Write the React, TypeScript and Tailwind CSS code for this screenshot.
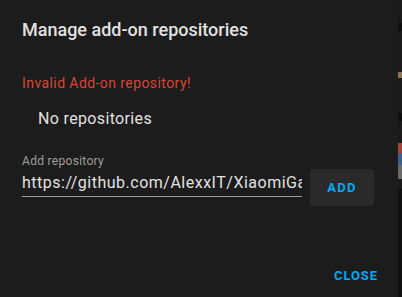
export default function App() {
  return (
    <div className="flex h-[297px] w-[402px] overflow-hidden bg-[#111111] font-['Roboto',sans-serif]">
      {/* Dialog */}
      <div className="flex w-[398px] shrink-0 flex-col bg-[#1c1c1c]">
        <h2 className="pl-[22px] pt-[19px] text-[18px] font-medium leading-[22px] text-[#e1e1e1]">
          Manage add-on repositories
        </h2>

        <div className="pl-[22px] pt-[32px] text-[14px] leading-[20px] tracking-[0.42px] text-[#db4437]">
          Invalid Add-on repository!
        </div>

        <div className="pl-[38px] pt-[16px] text-[16px] leading-[20px] tracking-[0.35px] text-[#e1e1e1]">
          No repositories
        </div>

        <div className="flex items-end gap-[8px] pl-[22px] pt-[25px]">
          <div className="flex w-[280px] flex-col">
            <label className="text-[12px] leading-[14px] tracking-[0.3px] text-[#9e9e9e]">Add repository</label>
            <div className="overflow-hidden whitespace-nowrap border-b border-[#9a9a9a] pb-[4px] pt-[5px] text-[16px] leading-[19px] tracking-[0.5px] text-[#e1e1e1]">
              https://github.com/AlexxIT/XiaomiGateway3
            </div>
          </div>
          <button className="mb-[-9px] h-[37px] w-[64px] rounded-[4px] bg-[#2a2a2a] text-[13px] font-bold tracking-[1.25px] text-[#03a9f4]">
            ADD
          </button>
        </div>

        <div className="mt-auto flex justify-end pb-[12px] pr-[20px]">
          <button className="text-[13px] font-bold tracking-[0.9px] text-[#03a9f4]">CLOSE</button>
        </div>
      </div>

      {/* Backdrop sliver */}
      <div className="flex flex-1 flex-col">
        <div className="h-[23px] bg-[#1a1a1a]" />
        <div className="h-[8px] bg-[#0d0d0d]" />
        <div className="h-[41px] bg-[#1a1a1a]" />
        <div className="h-[6px] bg-[#8b7355]" />
        <div className="h-[35px] bg-[#1a1a1a]" />
        <div className="h-[8px] bg-[#0d0d0d]" />
        <div className="h-[22px] bg-[#1a1a1a]" />
        <div className="h-[10px] bg-[#a0443c]" />
        <div className="h-[12px] bg-[#3d5f8a]" />
        <div className="h-[14px] bg-[#6a6a6a]" />
        <div className="h-[10px] bg-[#1a1a1a]" />
        <div className="flex-1 bg-[#0f0f0f]" />
      </div>
    </div>
  )
}
